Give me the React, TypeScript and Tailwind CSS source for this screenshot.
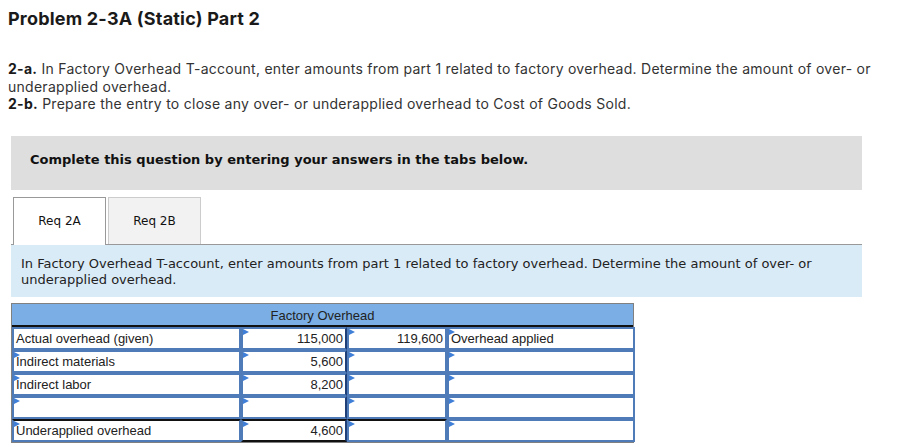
import React from "react";

const cols = "grid grid-cols-[229px_106px_100px_188px]";

function Tri() {
  return (
    <span className="absolute left-0 top-0 w-0 h-0 border-t-[3px] border-b-[3px] border-l-[6px] border-t-transparent border-b-transparent border-l-[#3f7fd8]" />
  );
}

function Cell({
  text = "",
  right = false,
  tri = true,
  extra = "",
}: {
  text?: string;
  right?: boolean;
  tri?: boolean;
  extra?: string;
}) {
  return (
    <div
      className={`relative h-[23px] bg-white border-2 border-[#4f7cb8] flex items-center px-[2px] text-[13px] text-[#222] leading-none ${
        right ? "justify-end" : ""
      } ${extra}`}
    >
      {tri && <Tri />}
      <span>{text}</span>
    </div>
  );
}

const rows = [
  { a: "Actual overhead (given)", b: "115,000", c: "119,600", d: "Overhead applied", triA: false },
  { a: "Indirect materials", b: "5,600", c: "", d: "", triA: true },
  { a: "Indirect labor", b: "8,200", c: "", d: "", triA: true },
  { a: "", b: "", c: "", d: "", triA: true },
];

export default function App() {
  return (
    <div className="w-[902px] h-[447px] bg-white overflow-hidden font-['Inter',sans-serif] text-[#222]">
      <h1 className="pl-[8px] pt-[7px] text-[18px] leading-[24px] font-bold text-[#1a1a1a] tracking-[0.2px]">
        Problem 2-3A (Static) Part 2
      </h1>

      <div className="pl-[8px] mt-[29px] text-[14px] leading-[17.5px] text-[#333] tracking-[0.27px]">
        <p>
          <b className="text-[#1a1a1a]">2-a.</b> In Factory Overhead T-account, enter amounts from part 1 related to
          factory overhead. Determine the amount of over- or underapplied overhead.
        </p>
        <p>
          <b className="text-[#1a1a1a]">2-b.</b> Prepare the entry to close any over- or underapplied overhead to Cost of
          Goods Sold.
        </p>
      </div>

      <div className="ml-[11px] mt-[23px] w-[851px] h-[54px] bg-[#dedede] pl-[19px] pt-[14px] font-['DejaVu_Sans',sans-serif] font-bold text-[13px] text-[#111]">
        Complete this question by entering your answers in the tabs below.
      </div>

      <div className="ml-[11px] mt-[7px] w-[851px] flex items-end border-b border-[#999] font-['DejaVu_Sans',sans-serif] text-[12px] text-[#111]">
        <div className="ml-[2px] w-[93px] h-[48px] bg-white border border-b-0 border-[#999] flex items-center justify-center -mb-px">
          Req 2A
        </div>
        <div className="ml-[2px] w-[93px] h-[47px] bg-[#f2f2f2] border border-b-0 border-[#ccc] flex items-center justify-center">
          Req 2B
        </div>
      </div>

      <div className="ml-[11px] w-[851px] h-[52px] bg-[#daebf8] pl-[10px] pt-[11px] font-['DejaVu_Sans',sans-serif] text-[13px] leading-[16px] text-[#222]">
        In Factory Overhead T-account, enter amounts from part 1 related to factory overhead. Determine the amount of
        over- or
        <br />
        underapplied overhead.
      </div>

      <div className="ml-[11px] mt-[6px] w-[623px] border border-[#808080] font-['Liberation_Sans',Arial,sans-serif]">
        <div className="h-[23px] bg-[#7aaee4] border-b-2 border-[#111] flex items-center justify-center pt-[3px] text-[13px] text-[#222]">
          Factory Overhead
        </div>
        {rows.map((r, i) => (
          <div key={i} className={cols}>
            <Cell text={r.a} tri={r.triA} />
            <Cell text={r.b} right extra="border-r-[#1f3f78]" />
            <Cell text={r.c} right />
            <Cell text={r.d} />
          </div>
        ))}
        <div className={cols}>
          <Cell text="Underapplied overhead" extra="border-t-[#111]" />
          <Cell text="4,600" right extra="border-t-[#111] border-r-[#1f3f78] border-b-[#111]" />
          <Cell extra="border-t-[#111]" />
          <Cell />
        </div>
      </div>
    </div>
  );
}
